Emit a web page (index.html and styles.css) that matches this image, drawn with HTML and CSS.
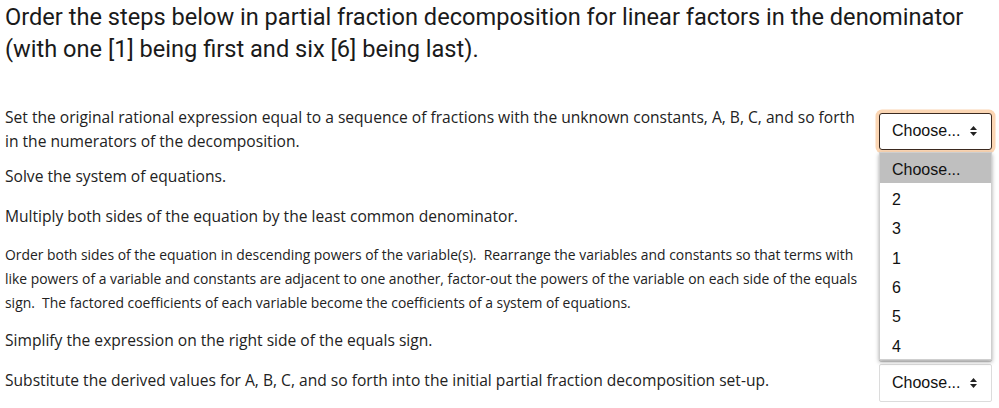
FILE: index.html
```html
<!DOCTYPE html>
<html lang="en">
<head>
<meta charset="utf-8">
<title>Partial fraction decomposition – ordering</title>
<link rel="stylesheet" href="styles.css">
</head>
<body>
<main class="question">
  <h1 class="prompt">Order the steps below in partial fraction decomposition for linear factors in the denominator (with one [1] being first and six [6] being last).</h1>

  <div class="steps">
    <div class="step step--tall">
      <p class="step-text">Set the original rational expression equal to a sequence of fractions with the unknown constants, A, B, C, and so forth in the numerators of the decomposition.</p>
      <div class="picker picker--focused">
        <span class="picker-label">Choose...</span>
        <svg class="picker-arrows" width="7" height="10" viewBox="0 0 7 10"><path d="M3.5 0 L7 4 L0 4 Z M0 6 L7 6 L3.5 10 Z" fill="#222"/></svg>
      </div>
    </div>

    <div class="step">
      <p class="step-text">Solve the system of equations.</p>
      <div class="picker">
        <span class="picker-label">Choose...</span>
        <svg class="picker-arrows" width="7" height="10" viewBox="0 0 7 10"><path d="M3.5 0 L7 4 L0 4 Z M0 6 L7 6 L3.5 10 Z" fill="#222"/></svg>
      </div>
    </div>

    <div class="step">
      <p class="step-text">Multiply both sides of the equation by the least common denominator.</p>
      <div class="picker">
        <span class="picker-label">Choose...</span>
        <svg class="picker-arrows" width="7" height="10" viewBox="0 0 7 10"><path d="M3.5 0 L7 4 L0 4 Z M0 6 L7 6 L3.5 10 Z" fill="#222"/></svg>
      </div>
    </div>

    <div class="step step--small">
      <p class="step-text">Order both sides of the equation in descending powers of the variable(s).&nbsp; Rearrange the variables and constants so that terms with like powers of a variable and constants are adjacent to one another, factor-out the powers of the variable on each side of the equals sign.&nbsp; The factored coefficients of each variable become the coefficients of a system of equations.</p>
      <div class="picker">
        <span class="picker-label">Choose...</span>
        <svg class="picker-arrows" width="7" height="10" viewBox="0 0 7 10"><path d="M3.5 0 L7 4 L0 4 Z M0 6 L7 6 L3.5 10 Z" fill="#222"/></svg>
      </div>
    </div>

    <div class="step">
      <p class="step-text">Simplify the expression on the right side of the equals sign.</p>
      <div class="picker">
        <span class="picker-label">Choose...</span>
        <svg class="picker-arrows" width="7" height="10" viewBox="0 0 7 10"><path d="M3.5 0 L7 4 L0 4 Z M0 6 L7 6 L3.5 10 Z" fill="#222"/></svg>
      </div>
    </div>

    <div class="step">
      <p class="step-text">Substitute the derived values for A, B, C, and so forth into the initial partial fraction decomposition set-up.</p>
      <div class="picker">
        <span class="picker-label">Choose...</span>
        <svg class="picker-arrows" width="7" height="10" viewBox="0 0 7 10"><path d="M3.5 0 L7 4 L0 4 Z M0 6 L7 6 L3.5 10 Z" fill="#222"/></svg>
      </div>
    </div>

    <!-- open option list of the first picker -->
    <ul class="options">
      <li class="option option--active">Choose...</li>
      <li class="option">2</li>
      <li class="option">3</li>
      <li class="option">1</li>
      <li class="option">6</li>
      <li class="option">5</li>
      <li class="option">4</li>
    </ul>
  </div>
</main>
</body>
</html>
```

FILE: styles.css
```css
html, body {
  margin: 0;
  padding: 0;
  background: #fff;
}

.question {
  padding: 1px 7px 0 5px;
  color: #1e1e1e;
}

.prompt {
  margin: 0;
  font-family: Roboto, "Liberation Sans", sans-serif;
  font-weight: 400;
  font-size: 23.6px;
  line-height: 32px;
  color: #1a1a1a;
}

.steps {
  position: relative;
  margin-top: 38px;
}

.step {
  display: grid;
  grid-template-columns: 866px 113px;
  column-gap: 8px;
  align-items: center;
  min-height: 40px;
}

.step-text {
  margin: 0;
  padding: 0 0 6px;
  font-family: "Open Sans", "Noto Sans", sans-serif;
  font-size: 15.6px;
  line-height: 24px;
  color: #222;
}

.step--tall {
  min-height: 56px;
}

.step--tall .step-text {
  padding: 2px 0 6px;
}

.step--small .step-text {
  padding: 4px 0 8px;
  font-size: 13.9px;
}

.picker {
  box-sizing: border-box;
  height: 38px;
  display: flex;
  align-items: center;
  justify-content: space-between;
  padding: 0 14px 0 12px;
  border: 1px solid #dcdcdc;
  border-radius: 2px;
  background: #fff;
  font-family: "Liberation Sans", Arial, sans-serif;
  font-size: 16px;
  color: #111;
}

.picker--focused {
  height: 37px;
  border: 1.5px solid #3b2a20;
  border-radius: 3px;
  box-shadow: 0 0 0 3.5px #fbd6b4;
}

.picker-arrows {
  display: block;
}

.options {
  position: absolute;
  top: 49px;
  left: 874px;
  width: 111px;
  margin: 0;
  padding: 0;
  list-style: none;
  background: #fff;
  border: 1px solid #cfcfcf;
  box-shadow: 0 2px 4px rgba(0, 0, 0, 0.35);
  font-family: "Liberation Sans", Arial, sans-serif;
  font-size: 16px;
  color: #111;
}

.option {
  box-sizing: border-box;
  height: 29.33px;
  padding: 4px 0 0 12px;
  line-height: 25px;
}

.option--active {
  height: 30px;
  line-height: 26px;
  background: #bfbfbf;
}
```
